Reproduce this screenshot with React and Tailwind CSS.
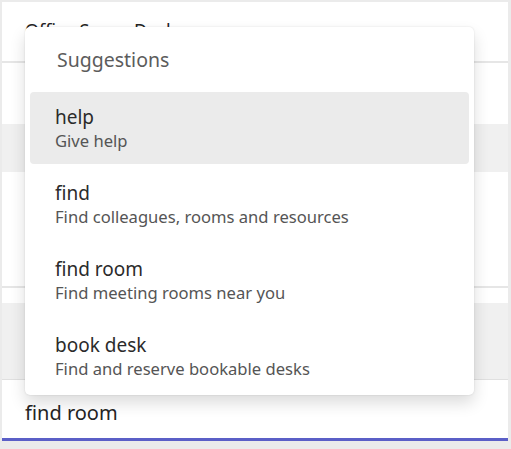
const suggestions = [
  { title: "help", desc: "Give help", active: true },
  { title: "find", desc: "Find colleagues, rooms and resources" },
  { title: "find room", desc: "Find meeting rooms near you" },
  { title: "book desk", desc: "Find and reserve bookable desks" },
];

export default function App() {
  return (
    <div
      className="w-[511px] h-[449px] bg-[#ebebeb] pt-[2px] pl-[2px] pr-[3px] pb-[8px]"
      style={{ fontFamily: '"Noto Sans", "Open Sans", sans-serif' }}
    >
      <div className="relative h-full bg-white flex flex-col">
        {/* chat background */}
        <div className="h-[59px] pl-[23px] pt-[15px] flex items-baseline gap-3 shrink-0">
          <span className="text-[18px] text-[#242424]">Office Space Desk</span>
          <span className="text-[13px] text-[#616161]">10:00</span>
        </div>
        <div className="h-[2px] bg-[#e6e6e6] shrink-0" />
        <div className="h-[61px] shrink-0" />
        <div className="h-[48px] bg-[#f0f0f0] shrink-0" />
        <div className="h-[114px] shrink-0" />
        <div className="h-[2px] bg-[#e6e6e6] shrink-0" />
        <div className="h-[15px] shrink-0" />
        <div className="h-[76px] bg-[#f0f0f0] shrink-0" />
        <div className="h-[1px] bg-[#e0e0e0] shrink-0" />
        <div className="flex-1 flex items-center pl-[23px] pt-[8px]">
          <span className="text-[20px] text-[#242424]">find room</span>
        </div>
        <div className="h-[3px] bg-[#5b5fc7] shrink-0" />

        {/* suggestions popup */}
        <div className="absolute left-[23px] top-[25px] w-[449px] bg-white rounded-[5px] shadow-[0_0_2px_rgba(0,0,0,0.12),0_8px_16px_rgba(0,0,0,0.14)] px-[5px] pb-[3px]">
          <div className="h-[65px] pl-[27px] pt-[21px] text-[19.5px] leading-[24px] text-[#5c5c5c]">
            Suggestions
          </div>
          <div className="flex flex-col gap-[4px]">
            {suggestions.map((s) => (
              <div
                key={s.title}
                className={`h-[72px] rounded-[4px] pl-[25px] pt-[12px] ${
                  s.active ? "bg-[#ebebeb]" : ""
                }`}
              >
                <div className="text-[19px] leading-[26px] text-[#2b2b2b]">{s.title}</div>
                <div className="text-[16.6px] leading-[22px] text-[#555555]">{s.desc}</div>
              </div>
            ))}
          </div>
        </div>
      </div>
    </div>
  );
}
